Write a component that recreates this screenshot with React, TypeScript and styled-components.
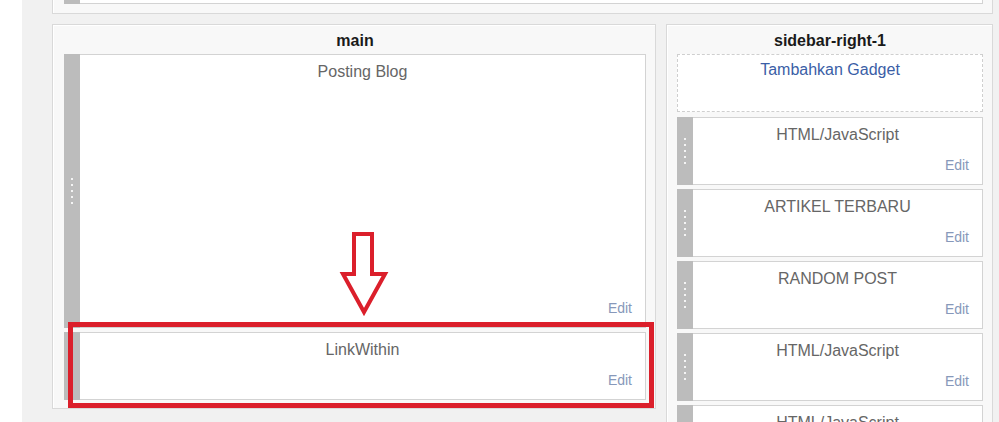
import React from "react";
import styled, { createGlobalStyle } from "styled-components";

const GlobalStyle = createGlobalStyle`
  html, body {
    margin: 0;
    padding: 0;
    background: #ffffff;
  }
  body {
    font-family: "Liberation Sans", Arial, sans-serif;
  }
`;

const Page = styled.div`
  height: 422px;
  overflow: hidden;
  padding-left: 22px;
  background: #ffffff;
`;

const Canvas = styled.div`
  display: flow-root;
  height: 100%;
  background: #f1f1f1;
  padding-left: 30px;
  box-sizing: border-box;
`;

const Panel = styled.div<{ $width: number; $padLeft: number }>`
  position: relative;
  box-sizing: border-box;
  width: ${(p) => p.$width}px;
  border: 1px solid #d9d9d9;
  background: #f8f8f8;
  box-shadow: inset 1px 1px 0 #ffffff;
  padding: 0 9px 8px ${(p) => p.$padLeft}px;
  display: flex;
  flex-direction: column;
  gap: 4px;
`;

const TopPanel = styled(Panel)`
  height: 41px;
  margin-top: -27px;
  padding-bottom: 9px;
`;

const Columns = styled.div`
  display: flex;
  align-items: flex-start;
  gap: 10px;
  margin-top: 10px;
`;

const SectionTitle = styled.div`
  height: 29px;
  box-sizing: border-box;
  padding-top: 7px;
  margin-bottom: -4px;
  line-height: 18px;
  font-size: 16px;
  font-weight: bold;
  color: #1a1a1a;
  text-align: center;
`;

const Widget = styled.div<{ $height: number }>`
  display: flex;
  height: ${(p) => p.$height}px;
  flex-shrink: 0;
`;

const Handle = styled.div`
  width: 16px;
  flex-shrink: 0;
  background: #bcbcbc;
  display: flex;
  align-items: center;
  justify-content: center;
`;

const Dots = styled.div`
  width: 2px;
  height: 26px;
  background: repeating-linear-gradient(
    to bottom,
    #f4f4f4 0 2px,
    transparent 2px 6px
  );
`;

const WidgetBody = styled.div`
  flex: 1;
  box-sizing: border-box;
  background: #ffffff;
  border: 1px solid #d3d3d3;
  border-left: none;
  padding: 8px 13px 10px 0;
  display: flex;
  flex-direction: column;
`;

const WidgetTitle = styled.div`
  font-size: 16px;
  line-height: 18px;
  color: #666666;
  text-align: center;
  padding-left: 13px;
`;

const EditLink = styled.a`
  margin-top: auto;
  align-self: flex-end;
  font-size: 14px;
  line-height: 18px;
  color: #8798ba;
  text-decoration: none;
  cursor: pointer;
`;

const AddGadget = styled.div`
  height: 58px;
  box-sizing: border-box;
  flex-shrink: 0;
  margin-bottom: 1px;
  border: 1px dashed #cfcfcf;
  background: #ffffff;
  padding-top: 6px;
  text-align: center;
  font-size: 16px;
  line-height: 18px;
  color: #3a5ea6;
`;

const Highlight = styled.div`
  position: absolute;
  left: 15px;
  top: 297px;
  width: 586px;
  height: 86px;
  box-sizing: border-box;
  border: 5px solid #db1f2b;
  pointer-events: none;
`;

const Arrow = styled.svg`
  position: absolute;
  left: 285px;
  top: 203px;
  width: 52px;
  height: 92px;
  overflow: visible;
  pointer-events: none;
`;

type GadgetProps = { title?: string; height: number; edit?: boolean };

const Gadget: React.FC<GadgetProps> = ({ title, height, edit = true }) => (
  <Widget $height={height}>
    <Handle>
      <Dots />
    </Handle>
    <WidgetBody>
      {title && <WidgetTitle>{title}</WidgetTitle>}
      {edit && <EditLink>Edit</EditLink>}
    </WidgetBody>
  </Widget>
);

const sidebarGadgets = [
  "HTML/JavaScript",
  "ARTIKEL TERBARU",
  "RANDOM POST",
  "HTML/JavaScript",
  "HTML/JavaScript",
];

const App: React.FC = () => {
  return (
    <>
      <GlobalStyle />
      <Page>
        <Canvas>
          <TopPanel $width={941} $padLeft={11}>
            <Widget $height={30}>
              <Handle />
              <WidgetBody />
            </Widget>
          </TopPanel>
          <Columns>
            <Panel $width={604} $padLeft={11}>
              <SectionTitle>main</SectionTitle>
              <Gadget title="Posting Blog" height={274} />
              <Gadget title="LinkWithin" height={68} />
              <Arrow viewBox="0 0 52 92">
                <polygon
                  points="16,6 34,6 34,46 47,46 26,84 5,46 16,46"
                  fill="none"
                  stroke="#db1f2b"
                  strokeWidth={4}
                  strokeLinejoin="miter"
                />
              </Arrow>
              <Highlight />
            </Panel>
            <Panel $width={327} $padLeft={10}>
              <SectionTitle>sidebar-right-1</SectionTitle>
              <AddGadget>Tambahkan Gadget</AddGadget>
              {sidebarGadgets.map((name, i) => (
                <Gadget key={i} title={name} height={68} />
              ))}
            </Panel>
          </Columns>
        </Canvas>
      </Page>
    </>
  );
};

export default App;
